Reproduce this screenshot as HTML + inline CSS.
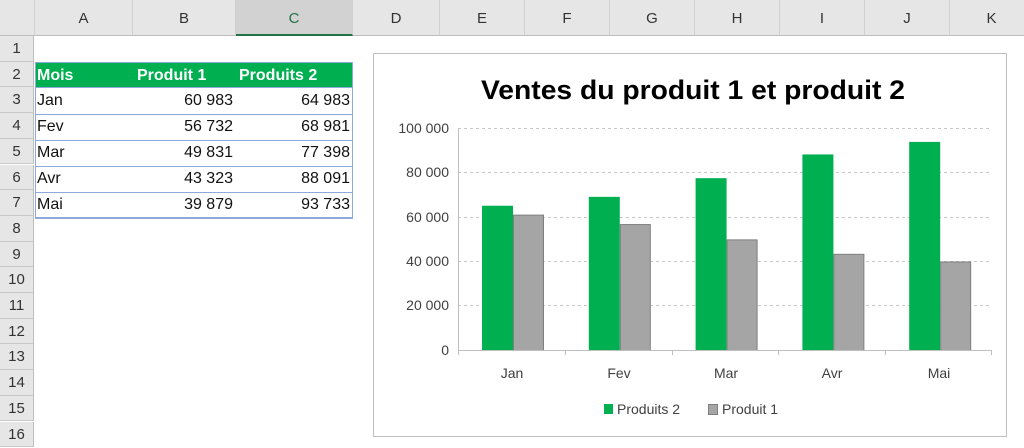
<!DOCTYPE html>
<html><head><meta charset="utf-8"><style>
*{margin:0;padding:0;box-sizing:border-box}
body{width:1024px;height:444px;overflow:hidden;background:#fff;font-family:"Liberation Sans",sans-serif;position:relative}
.a{position:absolute}
.ch{top:0;height:36px;background:#e6e6e6;border-right:1px solid #d0d0d0;border-bottom:1px solid #bdbdbd;text-align:center;line-height:38px;font-size:15px;color:#333}
.rh{left:0;width:34px;height:25.7px;background:#e6e6e6;border-bottom:1px solid #c8c8c8;border-right:1px solid #bdbdbd;text-align:center;font-size:15px;line-height:26px;color:#333}
.c{font-size:16px;height:25.7px;line-height:26px;color:#111}
</style></head><body>
<div class="a ch" style="left:0;width:35px"></div>
<div class="a ch" style="left:35px;width:98px">A</div>
<div class="a ch" style="left:133px;width:103px">B</div>
<div class="a ch" style="left:236px;width:117px;background:#d2d2d2;border-bottom:2px solid #217346;color:#217346">C</div>
<div class="a ch" style="left:353px;width:87px">D</div>
<div class="a ch" style="left:440px;width:85px">E</div>
<div class="a ch" style="left:525px;width:85px">F</div>
<div class="a ch" style="left:610px;width:85px">G</div>
<div class="a ch" style="left:695px;width:85px">H</div>
<div class="a ch" style="left:780px;width:85px">I</div>
<div class="a ch" style="left:865px;width:85px">J</div>
<div class="a ch" style="left:950px;width:84px">K</div>
<div id="rows"></div>
<div class="a" style="left:35px;top:62px;width:318px;height:26px;background:#00b050;border:1px solid #8ea9db"></div>
<div class="a c" style="left:37px;top:63px;color:#fff;font-weight:bold">Mois</div>
<div class="a c" style="left:137px;top:63px;color:#fff;font-weight:bold">Produit 1</div>
<div class="a c" style="left:239px;top:63px;color:#fff;font-weight:bold">Produits 2</div>
<div class="a" style="left:35px;top:88px;width:318px;height:130px;border:1px solid #8ea9db;border-top:none"></div>
<script>
var r=document.getElementById('rows'),h='';
for(var i=1;i<=16;i++){h+='<div class="a rh" style="top:'+(36+(i-1)*25.7)+'px">'+i+'</div>';}
var d=[["Jan","60 983","64 983"],["Fev","56 732","68 981"],["Mar","49 831","77 398"],["Avr","43 323","88 091"],["Mai","39 879","93 733"]];
for(var j=0;j<5;j++){var t=88+j*26;
h+='<div class="a" style="left:35px;top:'+(t+25.5)+'px;width:318px;height:1px;background:#8ea9db"></div>';
h+='<div class="a c" style="left:37px;top:'+t+'px">'+d[j][0]+'</div>';
h+='<div class="a c" style="left:133px;width:100px;text-align:right;top:'+t+'px">'+d[j][1]+'</div>';
h+='<div class="a c" style="left:236px;width:114px;text-align:right;top:'+t+'px">'+d[j][2]+'</div>';}
r.innerHTML=h;
</script>
<svg class="a" style="left:0;top:0" width="1024" height="444">
<rect x="373.5" y="53.5" width="633" height="383" fill="#fff" stroke="#bfbfbf"/>
<text x="693" y="99" text-anchor="middle" font-size="27" font-weight="bold" fill="#000" textLength="424" lengthAdjust="spacingAndGlyphs">Ventes du produit 1 et produit 2</text>
<g stroke="#c8c8c8" stroke-dasharray="3,3">
<line x1="458" x2="992" y1="128.5" y2="128.5"/><line x1="458" x2="992" y1="172.5" y2="172.5"/><line x1="458" x2="992" y1="217.5" y2="217.5"/><line x1="458" x2="992" y1="261.5" y2="261.5"/><line x1="458" x2="992" y1="305.5" y2="305.5"/></g>
<g font-size="14" fill="#404040" text-anchor="end">
<text x="449" y="133">100 000</text><text x="449" y="177">80 000</text><text x="449" y="222">60 000</text><text x="449" y="266">40 000</text><text x="449" y="310">20 000</text><text x="449" y="355">0</text></g>
<g id="bars"></g>
<line x1="458" x2="992" y1="350.5" y2="350.5" stroke="#bfbfbf"/>
<line x1="458.5" x2="458.5" y1="128" y2="355" stroke="#bfbfbf"/>
<g stroke="#bfbfbf"><line x1="565.5" x2="565.5" y1="350" y2="355"/><line x1="672.5" x2="672.5" y1="350" y2="355"/><line x1="778.5" x2="778.5" y1="350" y2="355"/><line x1="885.5" x2="885.5" y1="350" y2="355"/><line x1="991.5" x2="991.5" y1="350" y2="355"/></g>
<g font-size="14" fill="#404040" text-anchor="middle">
<text x="512" y="378">Jan</text><text x="619" y="378">Fev</text><text x="726" y="378">Mar</text><text x="832" y="378">Avr</text><text x="939" y="378">Mai</text></g>
<rect x="604" y="404" width="9" height="10" fill="#00b050"/>
<text x="617" y="414" font-size="14" fill="#404040">Produits 2</text>
<rect x="708.5" y="404.5" width="9" height="10" fill="#a5a5a5" stroke="#7f7f7f"/>
<text x="722" y="414" font-size="14" fill="#404040">Produit 1</text>
</svg>
<script>
var g=[64983,68981,77398,88091,93733],p=[60983,56732,49831,43323,39879],b='';
for(var k=0;k<5;k++){var x=458+k*106.8+24;var hg=g[k]*0.00222,hp=p[k]*0.00222;
b+='<rect x="'+x+'" y="'+(350-hg)+'" width="31" height="'+hg+'" fill="#00b050"/>';
b+='<rect x="'+(x+31.5)+'" y="'+(350.5-hp)+'" width="30" height="'+hp+'" fill="#a5a5a5" stroke="#7f7f7f"/>';}
document.getElementById('bars').innerHTML=b;
</script>
</body></html>
